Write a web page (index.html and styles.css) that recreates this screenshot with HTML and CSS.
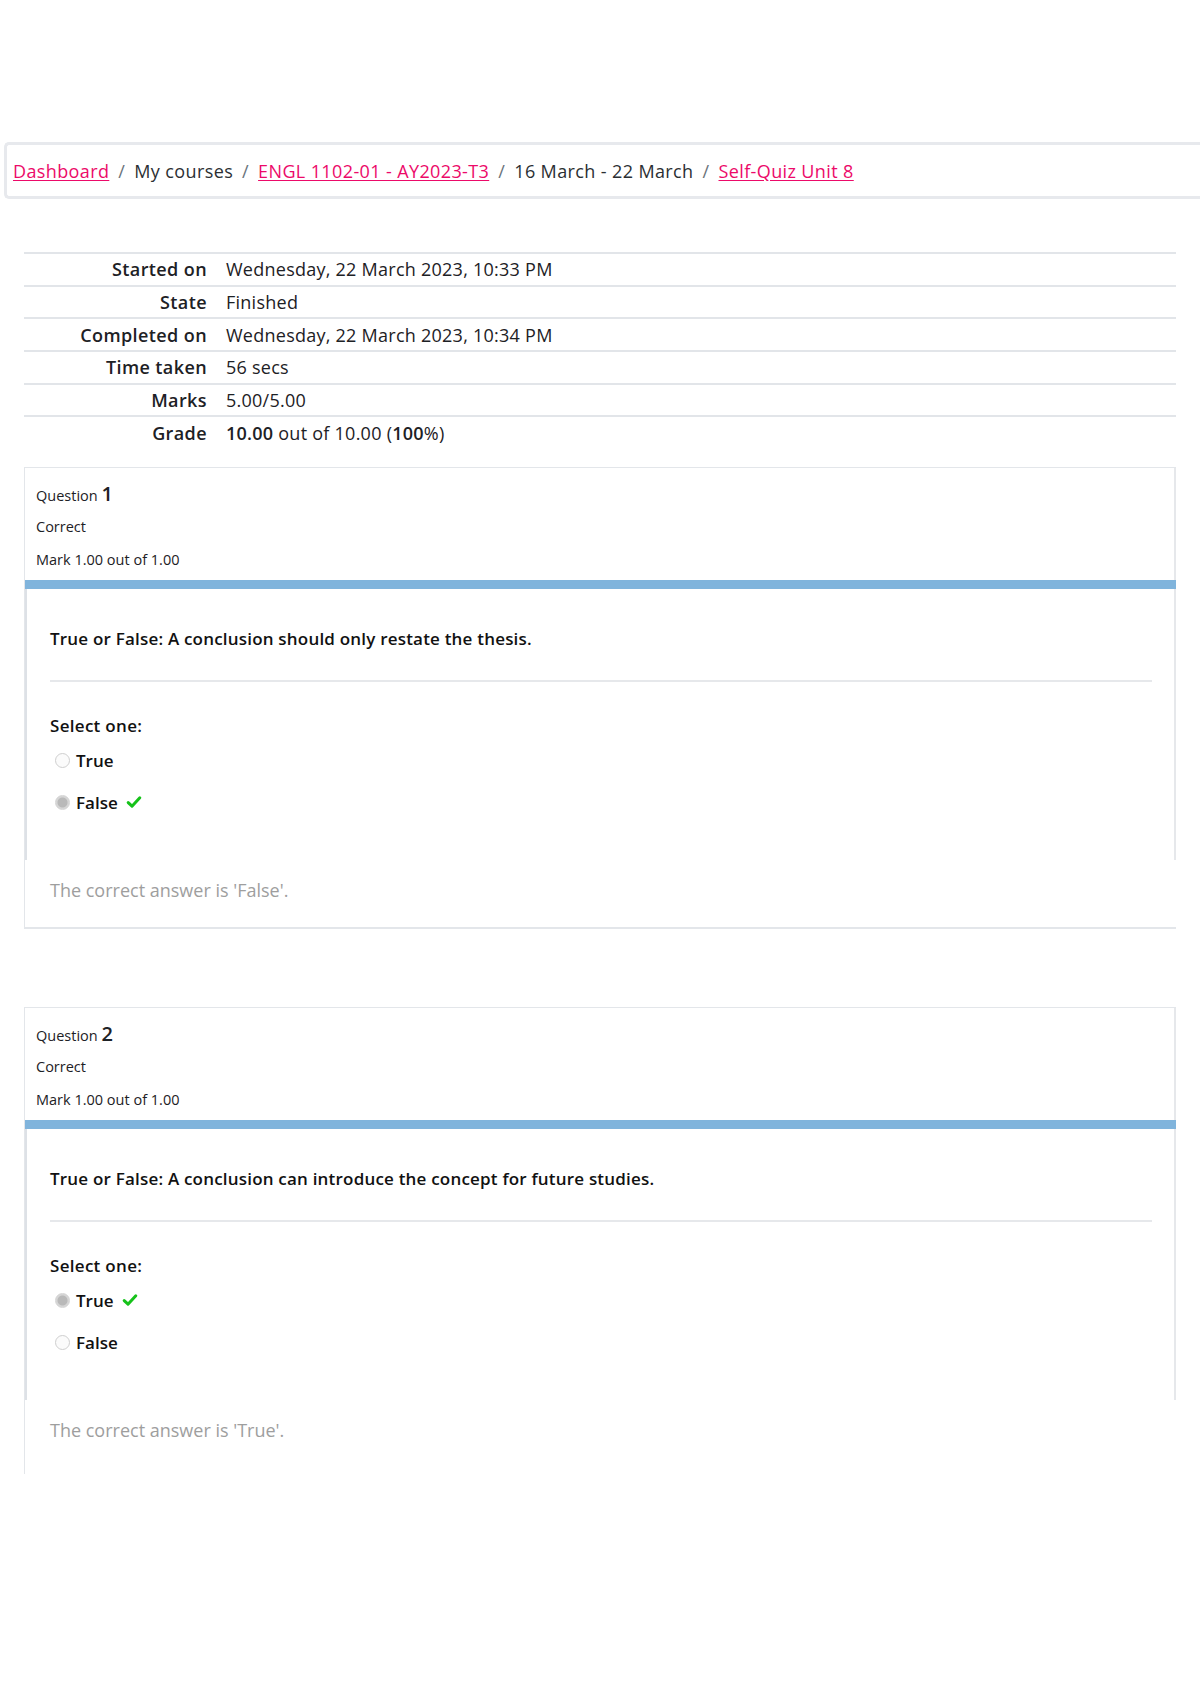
FILE: index.html
```html
<!DOCTYPE html>
<html lang="en">
<head>
<meta charset="utf-8">
<title>Self-Quiz Unit 8: Attempt review</title>
<link rel="stylesheet" href="styles.css">
</head>
<body>
<nav class="crumbs">
  <a href="#" class="crumb-link">Dashboard</a>
  <span class="sep">/</span>
  <span class="crumb">My courses</span>
  <span class="sep">/</span>
  <a href="#" class="crumb-link">ENGL 1102-01 - AY2023-T3</a>
  <span class="sep">/</span>
  <span class="crumb">16 March - 22 March</span>
  <span class="sep">/</span>
  <a href="#" class="crumb-link">Self-Quiz Unit 8</a>
</nav>

<main class="page">
  <table class="summary">
    <tbody>
      <tr><th>Started on</th><td>Wednesday, 22 March 2023, 10:33 PM</td></tr>
      <tr><th>State</th><td>Finished</td></tr>
      <tr><th>Completed on</th><td>Wednesday, 22 March 2023, 10:34 PM</td></tr>
      <tr><th>Time taken</th><td>56 secs</td></tr>
      <tr><th>Marks</th><td>5.00/5.00</td></tr>
      <tr class="last"><th>Grade</th><td><b>10.00</b> out of 10.00 (<b>100</b>%)</td></tr>
    </tbody>
  </table>

  <section class="que">
    <div class="info">
      <h3 class="qno">Question <span class="num">1</span></h3>
      <div class="state">Correct</div>
      <div class="grade">Mark 1.00 out of 1.00</div>
    </div>
    <div class="bar"></div>
    <div class="formulation">
      <div class="qtext">True or False: A conclusion should only restate the thesis.</div>
      <hr class="qsep">
      <div class="prompt">Select one:</div>
      <div class="answer">
        <div class="opt"><span class="radio"></span><span class="lbl">True</span></div>
        <div class="opt"><span class="radio checked"></span><span class="lbl">False</span>
          <svg class="tick" viewBox="0 0 16 16" width="16" height="16"><path d="M2.2 8.6 L6 12.2 L13.8 3.8" fill="none" stroke="#16c21a" stroke-width="3" stroke-linecap="round" stroke-linejoin="round"/></svg>
        </div>
      </div>
    </div>
    <div class="outcome">The correct answer is 'False'.</div>
  </section>

  <section class="que cut">
    <div class="info">
      <h3 class="qno">Question <span class="num">2</span></h3>
      <div class="state">Correct</div>
      <div class="grade">Mark 1.00 out of 1.00</div>
    </div>
    <div class="bar"></div>
    <div class="formulation">
      <div class="qtext">True or False: A conclusion can introduce the concept for future studies.</div>
      <hr class="qsep">
      <div class="prompt">Select one:</div>
      <div class="answer">
        <div class="opt"><span class="radio checked"></span><span class="lbl">True</span>
          <svg class="tick" viewBox="0 0 16 16" width="16" height="16"><path d="M2.2 8.6 L6 12.2 L13.8 3.8" fill="none" stroke="#16c21a" stroke-width="3" stroke-linecap="round" stroke-linejoin="round"/></svg>
        </div>
        <div class="opt"><span class="radio"></span><span class="lbl">False</span></div>
      </div>
    </div>
    <div class="outcome">The correct answer is 'True'.</div>
  </section>
</main>
</body>
</html>
```

FILE: styles.css
```css
html, body {
  margin: 0;
  padding: 0;
  background: #ffffff;
}

body {
  font-family: "Open Sans", "Noto Sans", "Liberation Sans", sans-serif;
  color: #1d2125;
  min-height: 1697px;
}

/* Breadcrumb bar */
.crumbs {
  margin: 142px 0 0 4px;
  height: 51px;
  border: 3px solid #e7e9ed;
  border-right: none;
  border-radius: 5px 0 0 5px;
  padding-left: 6px;
  display: flex;
  align-items: center;
  font-size: 18px;
  letter-spacing: 0.38px;
  color: #2b2f33;
  white-space: nowrap;
}

.crumb-link {
  color: #ec0a69;
  text-decoration: underline;
  text-underline-offset: 2px;
}

.sep {
  color: #6a737b;
  padding: 0 9px;
}

/* Page body */
.page {
  padding: 0 24px;
}

/* Summary table */
.summary {
  margin-top: 53px;
  width: 100%;
  border-collapse: collapse;
  font-size: 18px;
  letter-spacing: 0.25px;
}

.summary tr {
  border-top: 2px solid #e2e5e9;
  height: 32.7px;
}

.summary th {
  width: 183px;
  text-align: right;
  font-weight: 600;
  letter-spacing: 0.4px;
  padding: 0;
  color: #1d2125;
}

.summary td {
  padding: 0 0 0 19px;
  color: #1d2125;
}

.summary td b {
  font-weight: 600;
}

/* Question card */
.que {
  margin-top: 18px;
  border-top: 1px solid #e3e6ea;
  border-left: 1px solid #e3e6ea;
  border-bottom: 2px solid #e3e6ea;
}

.que + .que {
  margin-top: 78px;
}

.que.cut {
  border-bottom: none;
}

.info {
  padding: 9px 11px 4px;
  border-right: 2px solid #e6e8eb;
  font-size: 14.5px;
  color: #1d2125;
}

.info > * {
  height: 33px;
  line-height: 33px;
  margin: 0;
}

.qno {
  font-size: 14.5px;
  font-weight: 400;
}

.qno .num {
  font-size: 20px;
  font-weight: 600;
}

.bar {
  height: 9px;
  background: #80b4dc;
}

.formulation {
  border-left: 2px solid #dde1e6;
  border-right: 2px solid #e6e8eb;
  padding: 37px 22px 37px 23px;
}

.qtext {
  font-size: 17px;
  font-weight: 600;
  letter-spacing: 0.2px;
  line-height: 26px;
  color: #111;
}

.qsep {
  margin: 28px 0 0;
  border: none;
  border-top: 2px solid #e6e8eb;
  height: 0;
}

.prompt {
  margin-top: 31px;
  font-size: 17px;
  font-weight: 600;
  letter-spacing: 0.3px;
  line-height: 26px;
  color: #111;
}

.answer {
  display: flex;
  flex-direction: column;
}

.opt {
  height: 42px;
  display: flex;
  align-items: center;
  gap: 6px;
  padding-left: 5px;
  font-size: 17px;
  font-weight: 600;
  color: #111;
}

.radio {
  width: 13px;
  height: 13px;
  border-radius: 50%;
  border: 1px solid #cfcfcf;
  background: #fbfbfb;
  flex: none;
}

.radio.checked {
  background: radial-gradient(circle, #b9b9b9 0 4.5px, #d6d6d6 5.5px);
  border-color: #d4d4d4;
}

.tick {
  margin-left: 2px;
}

.outcome {
  padding: 17px 23px 24px 25px;
  font-size: 18px;
  line-height: 26px;
  color: #9e9e9e;
}

.que.cut .outcome {
  padding-bottom: 31px;
}
```
